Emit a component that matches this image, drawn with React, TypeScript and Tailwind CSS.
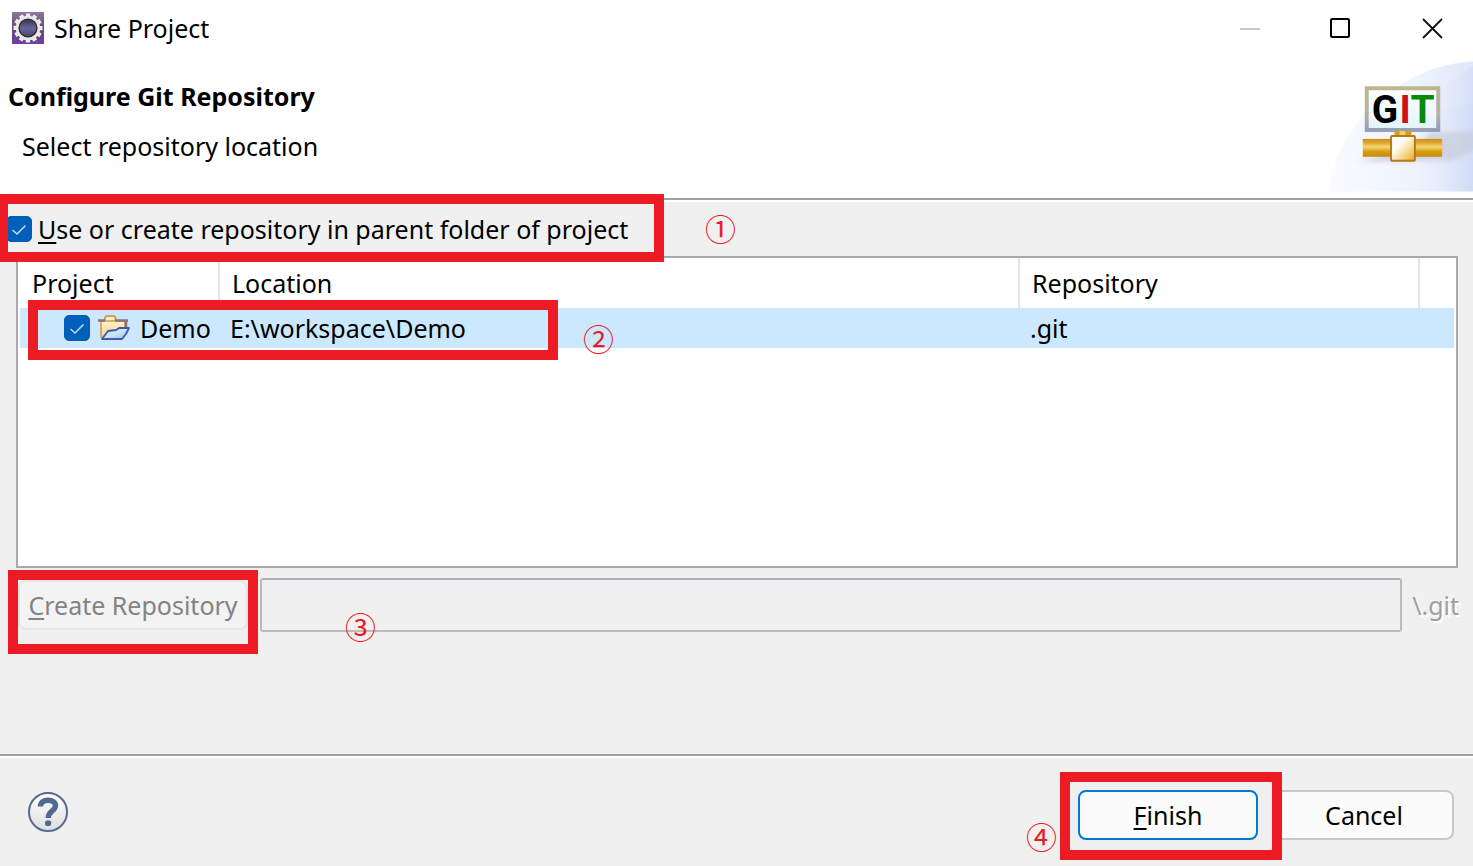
import type { ReactNode } from "react";

function EclipseIcon() {
  const teeth = Array.from({ length: 12 }, (_, i) => i * 30);
  return (
    <svg viewBox="0 0 32 32" className="size-8 shrink-0" aria-hidden="true">
      <defs>
        <linearGradient id="plate" x1="0" y1="0" x2="0" y2="1">
          <stop offset="0" stopColor="#8f789c" />
          <stop offset="0.5" stopColor="#5d4a76" />
          <stop offset="1" stopColor="#7040a0" />
        </linearGradient>
        <linearGradient id="globe" x1="0" y1="0" x2="0" y2="1">
          <stop offset="0" stopColor="#3a3850" />
          <stop offset="0.5" stopColor="#69649a" />
          <stop offset="1" stopColor="#4d4770" />
        </linearGradient>
      </defs>
      <rect width="32" height="32" fill="url(#plate)" />
      {teeth.map((a) => (
        <rect key={a} x="14" y="1.500" width="4.200" height="6" fill="#f0eeea" transform={`rotate(${a} 16 16)`} />
      ))}
      <circle cx="16" cy="16" r="12.300" fill="#ebe9e4" />
      <circle cx="16" cy="16" r="9.600" fill="#2e2c36" />
      <circle cx="16" cy="16" r="8.200" fill="url(#globe)" />
    </svg>
  );
}

function GitBanner() {
  return (
    <svg viewBox="0 0 145 132" className="h-33 w-36 shrink-0" preserveAspectRatio="xMaxYMid meet" aria-hidden="true">
      <defs>
        <linearGradient id="sweep" x1="0" y1="0" x2="1" y2="0">
          <stop offset="0" stopColor="#f9fbff" />
          <stop offset="0.6" stopColor="#eef3fd" />
          <stop offset="1" stopColor="#dfe7f9" />
        </linearGradient>
        <linearGradient id="sweep2" x1="0" y1="0" x2="1" y2="0">
          <stop offset="0" stopColor="#e6edfb" stopOpacity="0" />
          <stop offset="1" stopColor="#c9d8f5" />
        </linearGradient>
        <linearGradient id="frame" x1="0" y1="0" x2="0" y2="1">
          <stop offset="0" stopColor="#bdb590" />
          <stop offset="0.6" stopColor="#b5b3a5" />
          <stop offset="1" stopColor="#939fb8" />
        </linearGradient>
        <linearGradient id="paper" x1="0" y1="0" x2="0" y2="1">
          <stop offset="0" stopColor="#ffffff" />
          <stop offset="1" stopColor="#e2f3fd" />
        </linearGradient>
        <linearGradient id="pipe" x1="0" y1="0" x2="0" y2="1">
          <stop offset="0" stopColor="#cf8d1c" />
          <stop offset="0.2" stopColor="#dfa32a" />
          <stop offset="0.45" stopColor="#f5d878" />
          <stop offset="0.7" stopColor="#d99d0d" />
          <stop offset="1" stopColor="#c58b16" />
        </linearGradient>
        <linearGradient id="knot" x1="0" y1="0" x2="1" y2="1">
          <stop offset="0.35" stopColor="#fffdf7" />
          <stop offset="0.6" stopColor="#f9dfa0" />
          <stop offset="1" stopColor="#eda51c" />
        </linearGradient>
        <linearGradient id="shade" x1="0" y1="0" x2="1" y2="0">
          <stop offset="0" stopColor="#b8bac2" stopOpacity="0.8" />
          <stop offset="1" stopColor="#b8bcc8" stopOpacity="0.35" />
        </linearGradient>
        <filter id="soft" x="-20%" y="-50%" width="140%" height="200%">
          <feGaussianBlur stdDeviation="2.5" />
        </filter>
      </defs>
      <path d="M0 132C4 70 70 4 145 1v131z" fill="url(#sweep)" />
      <path d="M105 38C115 27 130 10 145 6v126h-40z" fill="url(#sweep2)" opacity="0.45" />
      <path d="M90 60c18-10 38-15 55-17v89H90z" fill="url(#sweep2)" opacity="0.5" />
      <path d="M28 101h95c12-4 20-9 28-12V72h-50L90 90z" fill="url(#shade)" filter="url(#soft)" />
      <rect x="38" y="28" width="72" height="42" fill="url(#paper)" stroke="url(#frame)" strokeWidth="4" />
      <g fontFamily="Roboto, sans-serif" fontWeight="700" fontSize="39">
        <text x="43" y="63" fill="#000">G</text>
        <text x="71" y="63" fill="#d01018">I</text>
        <text x="82" y="63" fill="#078a0b">T</text>
      </g>
      <rect x="66" y="71" width="17" height="7" fill="#d99b1a" />
      <path d="M71 71h6v7h-6z" fill="#f4cf5e" />
      <rect x="34" y="79" width="80" height="18" fill="url(#pipe)" />
      <rect x="62.500" y="76" width="24" height="25" rx="1" fill="url(#knot)" stroke="#b57a1a" strokeWidth="2" />
    </svg>
  );
}

function FolderIcon() {
  return (
    <svg viewBox="0 0 32 26" className="h-6.5 w-8 shrink-0" aria-hidden="true">
      <defs>
        <linearGradient id="back" x1="0" y1="0" x2="0" y2="1">
          <stop offset="0" stopColor="#fdf2c8" />
          <stop offset="1" stopColor="#f6d58a" />
        </linearGradient>
        <linearGradient id="front" x1="0" y1="0" x2="1" y2="1">
          <stop offset="0" stopColor="#b5d6f5" />
          <stop offset="0.5" stopColor="#cfe6fb" />
          <stop offset="1" stopColor="#8fbbe8" />
        </linearGradient>
      </defs>
      <path d="M7 6V2.500l1.500-1.500h7.500l1.500 1.500V6" fill="#fdf0cf" stroke="#d1a45e" strokeWidth="2" />
      <path d="M3 23V6h24v9" fill="url(#back)" stroke="#c89a50" strokeWidth="1.500" />
      <path d="M0 5.500h7M17 5.500h13M28 6v6" stroke="#86717c" strokeWidth="2.500" />
      <path d="M4 24 10 16l8-1 3-2h10l-3 6-4 5z" fill="url(#front)" stroke="#4058b0" strokeWidth="1.800" strokeLinejoin="round" />
    </svg>
  );
}

function HelpIcon() {
  return (
    <svg viewBox="0 0 40 40" className="size-10" aria-hidden="true">
      <defs>
        <linearGradient id="disc" x1="0" y1="0" x2="0" y2="1">
          <stop offset="0" stopColor="#ffffff" />
          <stop offset="1" stopColor="#dedede" />
        </linearGradient>
      </defs>
      <circle cx="20" cy="20" r="19" fill="url(#disc)" stroke="#566b8d" strokeWidth="2" />
      <path d="M12.500 14.500c0-4 3-6.300 7.500-6.300s7.500 2 7.500 5.300c0 5.500-7.300 5.500-7.300 12.500" fill="none" stroke="#52698f" strokeWidth="5.400" />
      <rect x="17" y="28.500" width="6.200" height="5.500" rx="2" fill="#52698f" />
    </svg>
  );
}

function Tick({ id, label }: { id: string; label?: string }) {
  return (
    <span className="relative inline-flex size-6.5 shrink-0">
      <input
        id={id}
        type="checkbox"
        defaultChecked
        aria-label={label}
        className="peer size-6.5 appearance-none rounded-[5px] border border-[#7a7a7a] bg-white checked:border-[#005fb8] checked:bg-[#005fb8]"
      />
      <svg viewBox="0 0 26 26" className="pointer-events-none absolute inset-0 hidden peer-checked:block" aria-hidden="true">
        <path d="M6.500 14l4.500 4L19.500 9.500" fill="none" stroke="#c3dcf2" strokeWidth="1.500" />
      </svg>
    </span>
  );
}

function Frame({ className }: { className: string }) {
  return <div className={`pointer-events-none absolute z-10 border-10 border-[#ed1c24] ${className}`} />;
}

function Step({ className, children }: { className: string; children: ReactNode }) {
  return (
    <span
      className={`pointer-events-none absolute z-10 font-['Noto_Sans_CJK_SC',sans-serif] text-[31px] leading-8 text-[#ed1c24] ${className}`}
    >
      {children}
    </span>
  );
}

export default function App() {
  return (
    <div className="flex min-h-screen flex-col bg-[#f0f0f0] font-['Noto_Sans','Noto_Sans_CJK_SC',sans-serif] text-[25px] leading-8 text-black">
      <header className="border-b-2 border-[#a0a0a0] bg-white">
        <div className="flex h-15 items-start justify-between">
          <div className="flex items-center gap-2.5 pt-3 pl-3">
            <EclipseIcon />
            <span>Share Project</span>
          </div>
          <div className="flex gap-17 pr-7 pt-4">
            <button type="button" aria-label="Minimize" disabled className="size-6">
              <svg viewBox="0 0 24 24" className="size-6"><path d="M3 13h20" stroke="#c8c8c8" strokeWidth="2" /></svg>
            </button>
            <button type="button" aria-label="Maximize" className="size-6">
              <svg viewBox="0 0 24 24" className="size-6"><rect x="2" y="3" width="18" height="18" rx="1" fill="none" stroke="#000" strokeWidth="2" /></svg>
            </button>
            <button type="button" aria-label="Close" className="size-6">
              <svg viewBox="0 0 24 24" className="size-6"><path d="M2 3l19 19M21 3 2 22" stroke="#111" strokeWidth="1.800" /></svg>
            </button>
          </div>
        </div>
        <div className="flex items-start justify-between pb-1.5">
          <div className="pt-5 pl-2">
            <h1 className="font-bold">Configure Git Repository</h1>
            <p className="mt-4.5 pl-3.5">Select repository location</p>
          </div>
          <GitBanner />
        </div>
      </header>

      <main className="flex-1 border-t-2 border-b-2 border-t-white border-b-[#a0a0a0]">
        <div className="relative flex h-13.5 items-center pl-1.5">
          <label htmlFor="parent" className="flex items-center gap-1.5 whitespace-nowrap">
            <Tick id="parent" />
            <span><u className="decoration-2 underline-offset-3">U</u>se or create repository in parent folder of project</span>
          </label>
          <Frame className="-top-2 -left-0.5 h-17 w-[666px]" />
          <Step className="top-2.5 left-[705px]">①</Step>
        </div>

        <div className="relative ml-4 mr-[15px] min-h-78 border-2 border-[#a9a9ae] bg-white">
          <table className="w-full table-fixed border-separate border-spacing-0 text-left">
            <colgroup>
              <col className="w-[202px]" />
              <col />
              <col className="w-[400px]" />
              <col className="w-[36px]" />
            </colgroup>
            <thead>
              <tr className="h-12.5">
                {["Project", "Location", "Repository"].map((name) => (
                  <th key={name} scope="col" className="border-r-2 border-[#e5e5e5] p-0 pl-3 font-normal first:pl-3.5">
                    {name}
                  </th>
                ))}
                <td />
              </tr>
            </thead>
            <tbody>
              <tr className="h-10 bg-[#cce8ff] bg-clip-padding">
                <td className="border-l-2 border-white p-0 pl-11">
                  <span className="flex items-center gap-2">
                    <Tick id="demo" label="Demo" />
                    <FolderIcon />
                    <span className="whitespace-nowrap pl-0.5">Demo</span>
                  </span>
                </td>
                <td className="p-0 pl-2.5">E:\workspace\Demo</td>
                <td className="p-0 pl-2.5">.git</td>
                <td className="border-r-2 border-white p-0" />
              </tr>
            </tbody>
          </table>
          <Frame className="top-10.5 left-2.5 h-15 w-[530px]" />
          <Step className="top-16 left-[565px]">②</Step>
        </div>

        <div className="relative mt-2.5 flex items-center pr-3.5 pl-4.5">
          <button type="button" disabled className="h-12.5 w-[230px] shrink-0 rounded-lg border-2 border-[#e6e6e6] bg-[#f3f3f3] text-[#838383]">
            <u className="decoration-2 underline-offset-3">C</u>reate Repository
          </button>
          <input
            aria-label="Repository path"
            disabled
            className="ml-3 h-13.5 min-w-0 flex-1 rounded-[3px] border-2 border-[#bababa] border-t-[#adb2b8] bg-[#f0f0f0] px-2"
          />
          <span className="ml-2.5 text-[#a0a0a0] [text-shadow:2px_2px_0_#fff]">\.git</span>
          <Frame className="-top-2 left-2 h-21 w-[250px]" />
          <Step className="top-8 left-[345px]">③</Step>
        </div>
      </main>

      <footer className="relative flex h-27.5 shrink-0 items-center justify-between border-t-2 border-white pr-[19px] pl-7">
        <button type="button" aria-label="Help">
          <HelpIcon />
        </button>
        <div className="relative flex gap-4 pt-1.5">
          <button type="button" className="h-12.5 w-[180px] rounded-lg border-2 border-[#0078d4] bg-[#fbfbfb]">
            <u className="decoration-2 underline-offset-3">F</u>inish
          </button>
          <button type="button" className="h-12.5 w-[180px] rounded-lg border-2 border-[#c8c8c8] bg-[#fbfbfb]">
            Cancel
          </button>
          <Frame className="-top-3 -left-4.5 h-22 w-[222px]" />
          <Step className="top-9 -left-13">④</Step>
        </div>
      </footer>
    </div>
  );
}
